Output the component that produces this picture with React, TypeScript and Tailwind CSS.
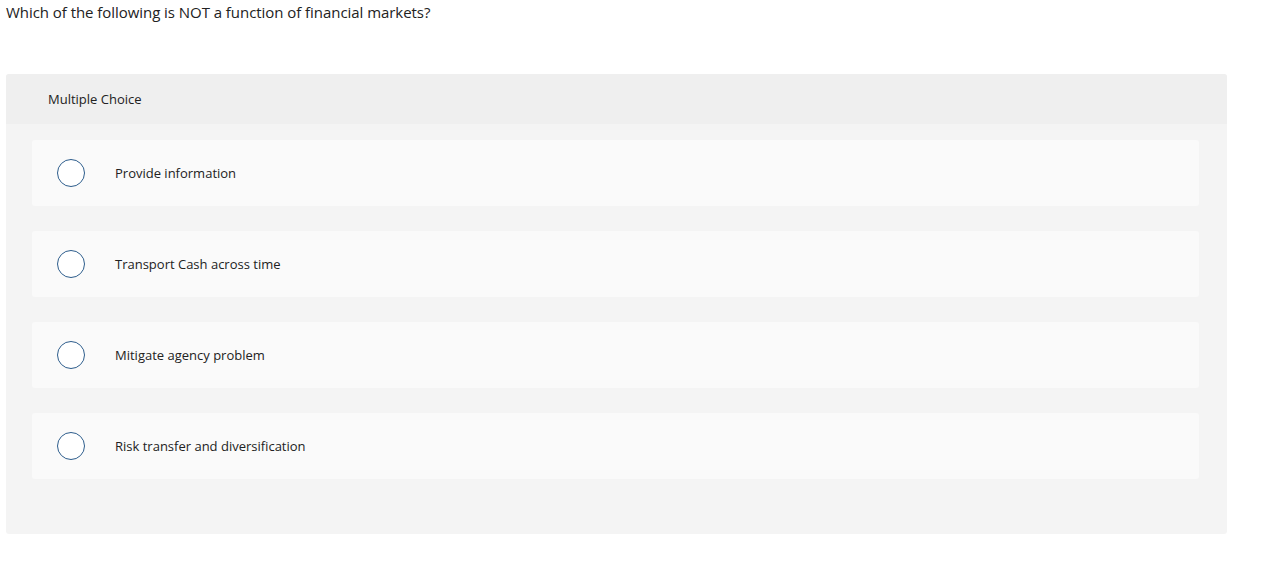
import React from "react";

const options = [
  "Provide information",
  "Transport Cash across time",
  "Mitigate agency problem",
  "Risk transfer and diversification",
];

export default function App() {
  return (
    <div className="min-h-[571px] bg-white text-[#333] font-['Open_Sans','Liberation_Sans',sans-serif]">
      <div className="pl-[6px] pt-[2px] text-[15px] leading-[20px] text-[#222] tracking-[-0.05px]">
        Which of the following is NOT a function of financial markets?
      </div>
      <div className="mt-[52px] ml-[6px] w-[1221px] rounded-[3px] bg-[#f4f4f4] pb-[55px]">
        <div className="h-[50px] flex items-center pl-[42px] pt-[1px] bg-[#efefef] rounded-t-[3px] text-[13px] text-[#222]">
          Multiple Choice
        </div>
        <div className="flex flex-col gap-[25px] pt-[16px] px-[26px] pr-[28px]">
          {options.map((o) => (
            <div key={o} className="h-[66px] bg-[#fafafa] rounded-[3px] flex items-center">
              <div className="ml-[25px] w-[28px] h-[28px] rounded-full border-[1.5px] border-[#2d5d8c] bg-white" />
              <div className="ml-[30px] pt-[1px] text-[13px] text-[#222]">{o}</div>
            </div>
          ))}
        </div>
      </div>
    </div>
  );
}
